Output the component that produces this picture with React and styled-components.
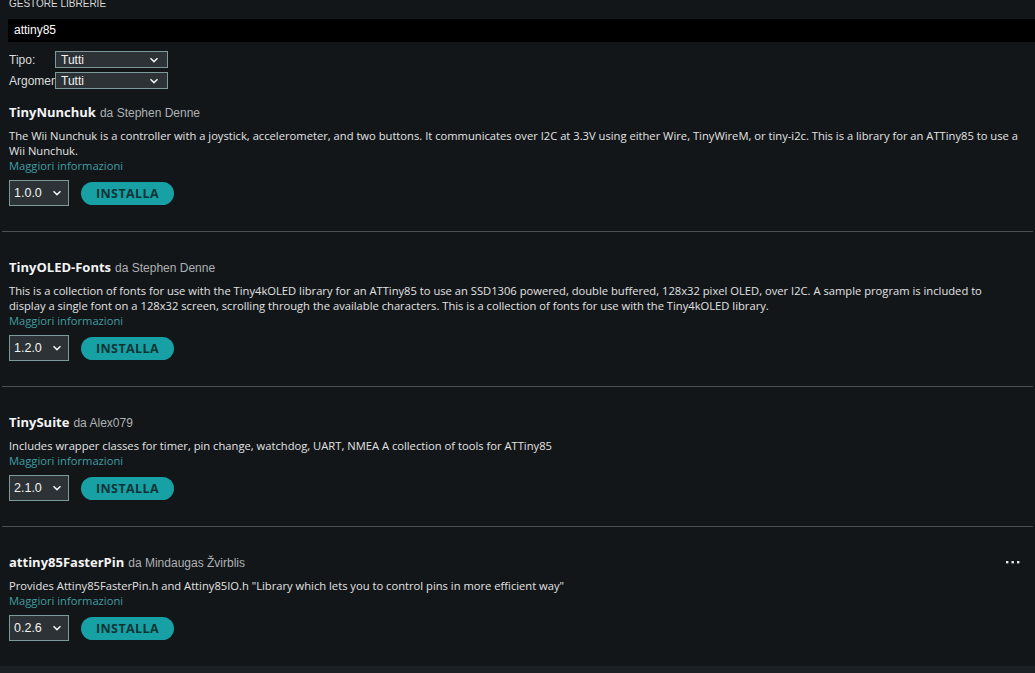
import styled, { createGlobalStyle } from "styled-components";

const GlobalStyle = createGlobalStyle`
  html, body {
    margin: 0;
    padding: 0;
    background: #1b2024;
  }
  * { box-sizing: border-box; }
`;

const Page = styled.div`
  width: 1035px;
  height: 673px;
  overflow: hidden;
  background: #1b2024;
`;

const Panel = styled.div`
  background: #121619;
`;

const Header = styled.div`
  font-family: "Liberation Sans", Arial, sans-serif;
  font-size: 10px;
  color: #d8d8d8;
  height: 19px;
  line-height: 8px;
  padding-left: 9px;
`;

const Search = styled.div`
  margin-left: 8px;
  height: 23px;
  background: #000;
  color: #fff;
  font-family: "Liberation Sans", Arial, sans-serif;
  font-size: 12px;
  line-height: 23px;
  padding-left: 6px;
`;

const Filters = styled.div`
  display: flex;
  flex-direction: column;
  gap: 4px;
  padding: 9px 0 0 9px;
`;

const FilterRow = styled.div`
  display: flex;
  align-items: center;
  height: 17px;
`;

const FilterLabel = styled.span`
  width: 46px;
  overflow: hidden;
  white-space: nowrap;
  font-family: "Liberation Sans", Arial, sans-serif;
  font-size: 12px;
  color: #dcdcdc;
`;

const Dropdown = styled.div`
  display: flex;
  align-items: center;
  justify-content: space-between;
  flex-shrink: 0;
  width: ${(p) => p.$width}px;
  height: ${(p) => p.$height}px;
  background: #2c3235;
  border: 1px solid #7c9a9c;
  color: #f2f2f2;
  font-family: "Liberation Sans", Arial, sans-serif;
  font-size: ${(p) => p.$size}px;
  padding: 0 ${(p) => p.$pad}px 0 ${(p) => p.$padLeft}px;
`;

const Chevron = ({ size = 10 }) => (
  <svg width={size} height={size} viewBox="0 0 10 10" fill="none">
    <path d="M1.5 3.2 L5 6.6 L8.5 3.2" stroke="#f0f0f0" strokeWidth="1.5" />
  </svg>
);

const Dots = () => (
  <svg width="14" height="4" viewBox="0 0 14 4">
    <rect x="0" y="1" width="2.4" height="2.4" fill="#e6e6e6" />
    <rect x="5.5" y="1" width="2.4" height="2.4" fill="#e6e6e6" />
    <rect x="11" y="1" width="2.4" height="2.4" fill="#e6e6e6" />
  </svg>
);

const List = styled.div``;

const Item = styled.div`
  margin: 0 2px;
  padding: 25px 13px 25px 7px;
  border-bottom: ${(p) => (p.$last ? "none" : "1px solid #4c5154")};
  &:first-child { padding-top: 13px; }
`;

const TitleRow = styled.div`
  display: flex;
  align-items: center;
  justify-content: space-between;
  height: 20px;
`;

const Title = styled.div`
  display: flex;
  align-items: baseline;
  gap: 4px;
`;

const Name = styled.span`
  font-family: "Open Sans", sans-serif;
  font-weight: 700;
  font-size: 13px;
  color: #f4f4f4;
`;

const Author = styled.span`
  font-family: "Liberation Sans", Arial, sans-serif;
  font-size: 12px;
  color: #aeb1b3;
`;

const Description = styled.div`
  margin-top: 6px;
  font-family: "Open Sans", sans-serif;
  font-size: 11.2px;
  line-height: 15px;
  color: #e2e2e2;
`;

const MoreInfo = styled.div`
  font-family: "Open Sans", sans-serif;
  font-size: 11.2px;
  line-height: 15px;
  color: #3f9ea3;
`;

const Controls = styled.div`
  display: flex;
  align-items: center;
  gap: 12px;
  margin-top: 7px;
`;

const InstallButton = styled.button`
  width: 93px;
  height: 23px;
  border: none;
  border-radius: 12px;
  background: #17a1a5;
  color: #0c3436;
  font-family: "Open Sans", sans-serif;
  font-weight: 700;
  font-size: 12.5px;
  letter-spacing: 0.4px;
  padding: 0;
`;

const libraries = [
  {
    name: "TinyNunchuk",
    author: "Stephen Denne",
    desc: "The Wii Nunchuk is a controller with a joystick, accelerometer, and two buttons. It communicates over I2C at 3.3V using either Wire, TinyWireM, or tiny-i2c. This is a library for an ATTiny85 to use a Wii Nunchuk.",
    version: "1.0.0",
  },
  {
    name: "TinyOLED-Fonts",
    author: "Stephen Denne",
    desc: "This is a collection of fonts for use with the Tiny4kOLED library for an ATTiny85 to use an SSD1306 powered, double buffered, 128x32 pixel OLED, over I2C. A sample program is included to display a single font on a 128x32 screen, scrolling through the available characters. This is a collection of fonts for use with the Tiny4kOLED library.",
    version: "1.2.0",
  },
  {
    name: "TinySuite",
    author: "Alex079",
    desc: "Includes wrapper classes for timer, pin change, watchdog, UART, NMEA A collection of tools for ATTiny85",
    version: "2.1.0",
  },
  {
    name: "attiny85FasterPin",
    author: "Mindaugas Žvirblis",
    desc: 'Provides Attiny85FasterPin.h and Attiny85IO.h "Library which lets you to control pins in more efficient way"',
    version: "0.2.6",
    menu: true,
  },
];

export default function App() {
  return (
    <Page>
      <GlobalStyle />
      <Panel>
        <Header>GESTORE LIBRERIE</Header>
        <Search>attiny85</Search>
        <Filters>
          <FilterRow>
            <FilterLabel>Tipo:</FilterLabel>
            <Dropdown $width={113} $height={17} $size={12} $pad={8} $padLeft={5}>
              <span>Tutti</span>
              <Chevron />
            </Dropdown>
          </FilterRow>
          <FilterRow>
            <FilterLabel>Argomento:</FilterLabel>
            <Dropdown $width={113} $height={17} $size={12} $pad={8} $padLeft={5}>
              <span>Tutti</span>
              <Chevron />
            </Dropdown>
          </FilterRow>
        </Filters>
        <List>
          {libraries.map((lib, i) => (
            <Item key={lib.name} $last={i === libraries.length - 1}>
              <TitleRow>
                <Title>
                  <Name>{lib.name}</Name>
                  <Author>da {lib.author}</Author>
                </Title>
                {lib.menu && <Dots />}
              </TitleRow>
              <Description>{lib.desc}</Description>
              <MoreInfo>Maggiori informazioni</MoreInfo>
              <Controls>
                <Dropdown $width={60} $height={26} $size={12.5} $pad={6} $padLeft={4}>
                  <span>{lib.version}</span>
                  <Chevron />
                </Dropdown>
                <InstallButton>INSTALLA</InstallButton>
              </Controls>
            </Item>
          ))}
        </List>
      </Panel>
    </Page>
  );
}
